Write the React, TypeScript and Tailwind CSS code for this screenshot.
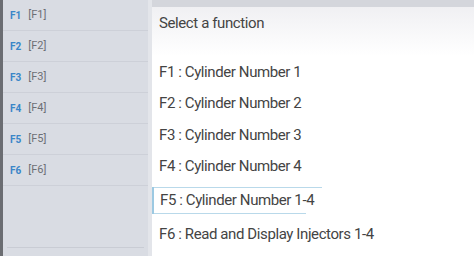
const keys = ['F1', 'F2', 'F3', 'F4', 'F5', 'F6'];

const functions = [
  'F1 : Cylinder Number 1',
  'F2 : Cylinder Number 2',
  'F3 : Cylinder Number 3',
  'F4 : Cylinder Number 4',
  'F5 : Cylinder Number 1-4',
  'F6 : Read and Display Injectors 1-4',
];

export default function App() {
  return (
    <div
      className="flex h-[256px] w-[474px] overflow-hidden bg-[#d9dce3]"
      style={{ fontFamily: 'Roboto, "Liberation Sans", sans-serif' }}
    >
      <div className="w-[3px] shrink-0 bg-[#6b6d72]" />
      <div className="flex w-[145px] shrink-0 flex-col">
        {keys.map((k) => (
          <div
            key={k}
            className="flex h-[31px] shrink-0 items-center gap-[7px] border-b border-[#cdd0d8] pl-[7px] pt-[1px]"
          >
            <span className="text-[10px] font-bold text-[#3a86c8]">{k}</span>
            <span className="text-[11px] text-[#6d6f75]">[{k}]</span>
          </div>
        ))}
        <div className="mx-[4px] mt-auto mb-[8px] border-b border-[#c9ccd4]" />
      </div>
      <div className="w-[4px] shrink-0 bg-[#e3e5ea]" />
      <div className="flex flex-1 flex-col bg-[#d4d6dc] pt-[7px]">
        <div className="flex flex-1 flex-col bg-white text-[15px] tracking-[-0.4px] text-[#444]">
          <div className="h-[49px] shrink-0 bg-gradient-to-b from-[#f0f0f3] to-white px-[7px] pt-[5px]">
            Select a function
          </div>
          <div className="flex flex-col">
            {functions.map((f, i) => (
              <div
                key={f}
                className={
                  i === 4
                    ? 'relative mt-[5px] flex h-[27px] items-center border-l-2 border-[#9cc9e2] px-[6px]'
                    : i === 5
                      ? 'mt-[4px] flex h-[31.5px] items-center px-[7px]'
                      : 'flex h-[31.5px] items-center px-[7px]'
                }
              >
                {i === 4 && (
                  <>
                    <span className="absolute top-0 left-0 h-px w-[168px] bg-[#b9d9ea]" />
                    <span className="absolute bottom-0 left-0 h-px w-[152px] bg-[#b9d9ea]" />
                  </>
                )}
                {f}
              </div>
            ))}
          </div>
        </div>
      </div>
    </div>
  );
}
